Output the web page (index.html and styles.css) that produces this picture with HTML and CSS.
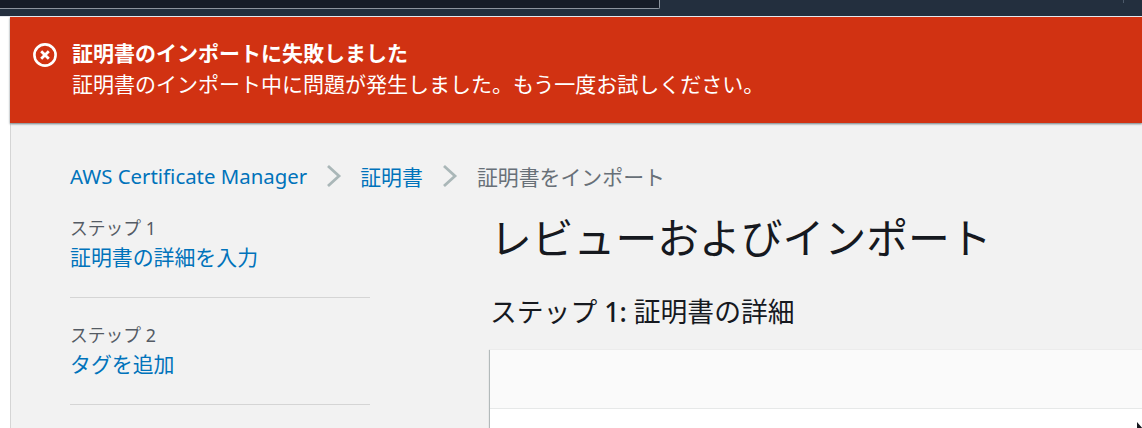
FILE: index.html
```html
<!DOCTYPE html>
<html lang="ja">
<head>
<meta charset="utf-8">
<title>レビューおよびインポート</title>
<link rel="stylesheet" href="styles.css">
</head>
<body>
<header class="topbar"><div class="search"></div><div class="tick"></div></header>
<div class="shell">
  <div class="rail"></div>
  <main class="page">
    <div class="flash">
      <svg class="flash-icon" viewBox="0 0 24 24" width="24" height="24" aria-hidden="true">
        <circle cx="12" cy="12" r="10.6" fill="none" stroke="#fff" stroke-width="2.6"/>
        <path d="M8.2 8.2l7.6 7.6M15.8 8.2l-7.6 7.6" fill="none" stroke="#fff" stroke-width="2.8"/>
      </svg>
      <div class="flash-text">
        <div class="flash-title">証明書のインポートに失敗しました</div>
        <div class="flash-body">証明書のインポート中に問題が発生しました。もう一度お試しください。</div>
      </div>
    </div>
    <div class="content">
      <nav class="crumbs">
        <a class="link latin">AWS Certificate Manager</a>
        <svg class="chev" viewBox="0 0 16 24" width="16" height="24" aria-hidden="true"><path d="M2 2l11 10L2 22" fill="none" stroke="#aab7b8" stroke-width="2.8"/></svg>
        <a class="link">証明書</a>
        <svg class="chev" viewBox="0 0 16 24" width="16" height="24" aria-hidden="true"><path d="M2 2l11 10L2 22" fill="none" stroke="#aab7b8" stroke-width="2.8"/></svg>
        <span class="crumb-current">証明書をインポート</span>
      </nav>
      <div class="columns">
        <ol class="steps">
          <li class="step"><div class="step-label">ステップ 1</div><a class="link">証明書の詳細を入力</a></li>
          <li class="step"><div class="step-label">ステップ 2</div><a class="link">タグを追加</a></li>
        </ol>
        <section class="main">
          <h1>レビューおよびインポート</h1>
          <h2>ステップ <span class="num">1:</span> 証明書の詳細</h2>
          <div class="card"><div class="card-head"></div><div class="card-body"></div></div>
        </section>
      </div>
    </div>
  </main>
</div>
<svg class="cursor" viewBox="0 0 8 12" width="8" height="12" aria-hidden="true"><path d="M1 0v11l3-3h4z" fill="#16191f"/></svg>
</body>
</html>
```
FILE: styles.css
```css
* { box-sizing: border-box; }
html, body { margin: 0; height: 428px; overflow: hidden; }
body {
  background: #fff;
  font-family: "Noto Sans", "Noto Sans CJK JP", sans-serif;
  color: #16191f;
  position: relative;
}
.topbar {
  height: 17px;
  background: #232f3e;
  border-bottom: 1px solid #e4e8ee;
  position: relative;
}
.search {
  width: 660px;
  height: 9px;
  background: #161c28;
  border: 1px solid #8c939e;
  border-width: 0 1px 1px 0;
  border-radius: 0 0 2px 0;
}
.tick {
  position: absolute;
  left: 1123px;
  top: 0;
  width: 1px;
  height: 3px;
  background: #4d5a6a;
}
.shell { display: flex; height: 411px; }
.rail { width: 10px; flex: none; background: #fff; }
.page { flex: 1; min-width: 0; background: #f2f2f2; border-left: 1px solid #d5d5d5; }
.flash {
  margin-left: -1px;
  height: 106px;
  background: #d13212;
  color: #fff;
  display: flex;
  align-items: flex-start;
  padding: 21px 0 0 22px;
  box-shadow: 0 1px 2px rgba(0, 28, 36, .55);
}
.flash-icon { flex: none; margin: 5px 15px 0 1px; }
.flash-text { font-size: 21px; line-height: 31px; }
.flash-title { font-weight: 700; }
.content { padding: 37px 0 0 59px; }
.crumbs {
  display: flex;
  align-items: center;
  height: 32px;
  font-size: 20.9px;
}
.latin { font-size: 20.4px; }
.link { color: #0073bb; }
.chev { margin: 0 18px 0 19px; flex: none; }
.crumb-current { color: #687078; margin-left: 1px; }
.columns { display: flex; margin-top: 16px; }
.steps { list-style: none; margin: 0; padding: 0; width: 300px; flex: none; }
.step {
  height: 107px;
  padding-top: 24px;
  font-size: 20.9px;
  line-height: 30px;
  border-bottom: 1px solid #d5d5d5;
}
.step:first-child { height: 90px; padding-top: 7px; }
.step-label { font-size: 17.8px; line-height: 27px; color: #545b64; }
.main { margin-left: 120px; flex: 1; min-width: 0; }
h1 { margin: 0; font-size: 41.8px; font-weight: 400; line-height: 60px; }
h2 { margin: 26px 0 0; font-size: 26.8px; font-weight: 400; line-height: 36px; }
.num { font-weight: 500; }
.card {
  margin-top: 19px;
  background: #fff;
  box-shadow: 0 1px 1px 0 rgba(0, 28, 36, .3), 1px 1px 1px 0 rgba(0, 28, 36, .15), -1px 1px 1px 0 rgba(0, 28, 36, .22);
}
.card-head { height: 60px; background: #fafafa; border-top: 1px solid #ececec; border-bottom: 1px solid #e6e8e8; }
.card-body { height: 40px; }
.cursor { position: absolute; left: 1136px; top: 422px; }
```
